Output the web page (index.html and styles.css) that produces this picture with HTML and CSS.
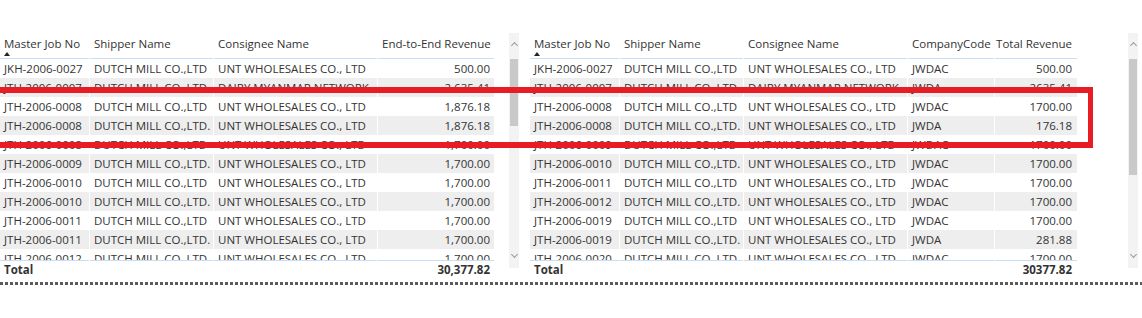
FILE: index.html
```html
<!DOCTYPE html>
<html>
<head>
<meta charset="utf-8">
<link rel="stylesheet" href="styles.css">
</head>
<body>
<div class="page">
  <div class="visuals">
    <div class="table t-left">
      <div class="row head">
        <div class="cell"><span>Master Job No</span><i class="sort"></i></div>
        <div class="cell">Shipper Name</div>
        <div class="cell">Consignee Name</div>
        <div class="cell num">End-to-End Revenue</div>
      </div>
      <div class="body">
        <div class="row"><div class="cell">JKH-2006-0027</div><div class="cell">DUTCH MILL CO.,LTD</div><div class="cell">UNT WHOLESALES CO., LTD</div><div class="cell num">500.00</div></div>
        <div class="row alt"><div class="cell">JTH-2006-0007</div><div class="cell">DUTCH MILL CO.,LTD</div><div class="cell">DAIRY MYANMAR NETWORK</div><div class="cell num">2,635.41</div></div>
        <div class="row"><div class="cell">JTH-2006-0008</div><div class="cell">DUTCH MILL CO.,LTD</div><div class="cell">UNT WHOLESALES CO., LTD</div><div class="cell num">1,876.18</div></div>
        <div class="row alt"><div class="cell">JTH-2006-0008</div><div class="cell">DUTCH MILL CO.,LTD.</div><div class="cell">UNT WHOLESALES CO., LTD</div><div class="cell num">1,876.18</div></div>
        <div class="row"><div class="cell">JTH-2006-0008</div><div class="cell">DUTCH MILL CO.,LTD</div><div class="cell">UNT WHOLESALES CO., LTD</div><div class="cell num">1,700.00</div></div>
        <div class="row alt"><div class="cell">JTH-2006-0009</div><div class="cell">DUTCH MILL CO.,LTD.</div><div class="cell">UNT WHOLESALES CO., LTD</div><div class="cell num">1,700.00</div></div>
        <div class="row"><div class="cell">JTH-2006-0010</div><div class="cell">DUTCH MILL CO.,LTD</div><div class="cell">UNT WHOLESALES CO., LTD</div><div class="cell num">1,700.00</div></div>
        <div class="row alt"><div class="cell">JTH-2006-0010</div><div class="cell">DUTCH MILL CO.,LTD.</div><div class="cell">UNT WHOLESALES CO., LTD</div><div class="cell num">1,700.00</div></div>
        <div class="row"><div class="cell">JTH-2006-0011</div><div class="cell">DUTCH MILL CO.,LTD</div><div class="cell">UNT WHOLESALES CO., LTD</div><div class="cell num">1,700.00</div></div>
        <div class="row alt"><div class="cell">JTH-2006-0011</div><div class="cell">DUTCH MILL CO.,LTD.</div><div class="cell">UNT WHOLESALES CO., LTD</div><div class="cell num">1,700.00</div></div>
        <div class="row"><div class="cell">JTH-2006-0012</div><div class="cell">DUTCH MILL CO.,LTD.</div><div class="cell">UNT WHOLESALES CO., LTD</div><div class="cell num">1,700.00</div></div>
      </div>
      <div class="row total">
        <div class="cell">Total</div><div class="cell"></div><div class="cell"></div><div class="cell num">30,377.82</div>
      </div>
    </div>
    <div class="scroll s-left">
      <span class="arrow up"></span>
      <span class="thumb"></span>
      <span class="arrow down"></span>
    </div>
    <div class="table t-right">
      <div class="row head">
        <div class="cell"><span>Master Job No</span><i class="sort"></i></div>
        <div class="cell">Shipper Name</div>
        <div class="cell">Consignee Name</div>
        <div class="cell">CompanyCode</div>
        <div class="cell num">Total Revenue</div>
      </div>
      <div class="body">
        <div class="row"><div class="cell">JKH-2006-0027</div><div class="cell">DUTCH MILL CO.,LTD</div><div class="cell">UNT WHOLESALES CO., LTD</div><div class="cell">JWDAC</div><div class="cell num">500.00</div></div>
        <div class="row alt"><div class="cell">JTH-2006-0007</div><div class="cell">DUTCH MILL CO.,LTD</div><div class="cell">DAIRY MYANMAR NETWORK</div><div class="cell">JWDA</div><div class="cell num">2635.41</div></div>
        <div class="row"><div class="cell">JTH-2006-0008</div><div class="cell">DUTCH MILL CO.,LTD</div><div class="cell">UNT WHOLESALES CO., LTD</div><div class="cell">JWDAC</div><div class="cell num">1700.00</div></div>
        <div class="row alt"><div class="cell">JTH-2006-0008</div><div class="cell">DUTCH MILL CO.,LTD.</div><div class="cell">UNT WHOLESALES CO., LTD</div><div class="cell">JWDA</div><div class="cell num">176.18</div></div>
        <div class="row"><div class="cell">JTH-2006-0009</div><div class="cell">DUTCH MILL CO.,LTD</div><div class="cell">UNT WHOLESALES CO., LTD</div><div class="cell">JWDAC</div><div class="cell num">1700.00</div></div>
        <div class="row alt"><div class="cell">JTH-2006-0010</div><div class="cell">DUTCH MILL CO.,LTD.</div><div class="cell">UNT WHOLESALES CO., LTD</div><div class="cell">JWDAC</div><div class="cell num">1700.00</div></div>
        <div class="row"><div class="cell">JTH-2006-0011</div><div class="cell">DUTCH MILL CO.,LTD</div><div class="cell">UNT WHOLESALES CO., LTD</div><div class="cell">JWDAC</div><div class="cell num">1700.00</div></div>
        <div class="row alt"><div class="cell">JTH-2006-0012</div><div class="cell">DUTCH MILL CO.,LTD.</div><div class="cell">UNT WHOLESALES CO., LTD</div><div class="cell">JWDAC</div><div class="cell num">1700.00</div></div>
        <div class="row"><div class="cell">JTH-2006-0019</div><div class="cell">DUTCH MILL CO.,LTD</div><div class="cell">UNT WHOLESALES CO., LTD</div><div class="cell">JWDAC</div><div class="cell num">1700.00</div></div>
        <div class="row alt"><div class="cell">JTH-2006-0019</div><div class="cell">DUTCH MILL CO.,LTD.</div><div class="cell">UNT WHOLESALES CO., LTD</div><div class="cell">JWDA</div><div class="cell num">281.88</div></div>
        <div class="row"><div class="cell">JTH-2006-0020</div><div class="cell">DUTCH MILL CO.,LTD.</div><div class="cell">UNT WHOLESALES CO., LTD</div><div class="cell">JWDAC</div><div class="cell num">1700.00</div></div>
      </div>
      <div class="row total">
        <div class="cell">Total</div><div class="cell"></div><div class="cell"></div><div class="cell"></div><div class="cell num">30377.82</div>
      </div>
    </div>
    <div class="scroll s-right">
      <span class="arrow up"></span>
      <span class="thumb"></span>
      <span class="arrow down"></span>
    </div>
  </div>
  <div class="dots"></div>
  <div class="highlight"></div>
</div>
</body>
</html>
```

FILE: styles.css
```css
* { box-sizing: border-box; }
html, body { margin: 0; padding: 0; background: #fff; }
body {
  font-family: "Open Sans", "Noto Sans", sans-serif;
  font-size: 11.5px;
  color: #333;
  width: 1142px;
  height: 318px;
  overflow: hidden;
}
.page { position: relative; height: 318px; padding-top: 35px; }
.visuals { display: flex; align-items: flex-start; }

.table { display: flex; flex-direction: column; }
.t-left { width: 494px; }
.t-right { width: 548px; margin-left: 11px; }

.row { display: grid; column-gap: 1px; height: 19px; }
.t-left .row { grid-template-columns: 89px 123px 163px 116px; }
.t-right .row { grid-template-columns: 89px 123px 163px 86px 82px; }

.cell {
  padding: 0 4px;
  line-height: 19px;
  white-space: nowrap;
  overflow: hidden;
}
.cell.num { text-align: right; padding-right: 4px; }
.t-right .cell.num { padding-right: 5px; }
.row.alt .cell { background: #eeeeee; }

.row.head { height: 24px; }
.row.head .cell {
  line-height: 18px;
  border-bottom: 1px solid #c8def3;
  position: relative;
}
.t-right .row.head .cell.num { padding-left: 1px; }
.sort {
  position: absolute;
  left: 4px;
  top: 17px;
  width: 0;
  height: 0;
  border-left: 3px solid transparent;
  border-right: 3px solid transparent;
  border-bottom: 4px solid #222;
}

.body { height: 201px; overflow: hidden; }

.row.total { height: 19px; }
.row.total .cell {
  border-top: 1px solid #c8def3;
  font-weight: 700;
  line-height: 18px;
}

.scroll {
  position: relative;
  width: 10px;
  height: 235px;
  margin-top: -2px;
  background: #f3f3f3;
  display: flex;
  flex-direction: column;
  align-items: center;
}
.s-left { margin-left: 15px; }
.s-right { margin-left: 50px; }
.thumb {
  display: block;
  width: 8px;
  background: #c9c9c9;
}
.s-left .thumb { margin-top: 11px; height: 67px; }
.s-right .thumb { margin-top: 11px; height: 116px; }
.arrow {
  display: block;
  width: 5px;
  height: 5px;
  border-left: 1px solid #9a9a9a;
  border-top: 1px solid #9a9a9a;
}
.arrow.up { margin-top: 10px; transform: rotate(45deg); }
.arrow.down { margin-top: auto; margin-bottom: 11px; transform: rotate(225deg); }

.dots {
  margin-top: 3px;
  height: 3px;
  background: repeating-linear-gradient(90deg, #5a5a5a 0 3px, transparent 3px 5px);
}

.highlight {
  position: absolute;
  left: -20px;
  top: 87px;
  width: 1113px;
  height: 61px;
  border: 6px solid #e81c24;
  border-left-width: 0;
  border-right-width: 5px;
  pointer-events: none;
}
```
